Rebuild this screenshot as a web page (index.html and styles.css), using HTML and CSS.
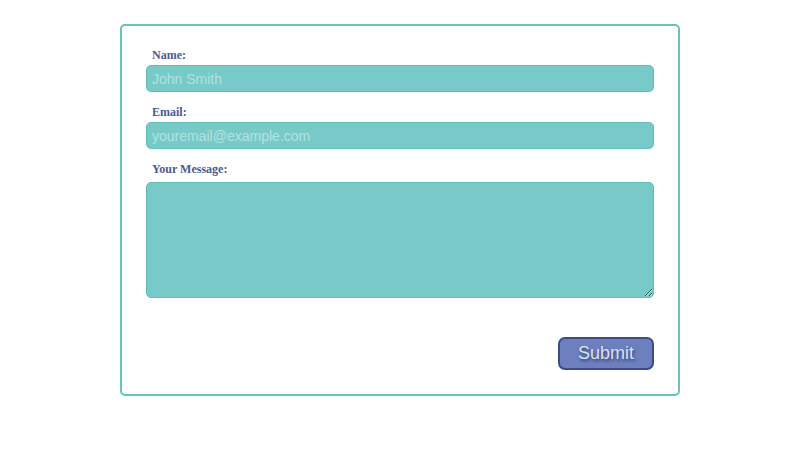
FILE: index.html
```html
<!DOCTYPE html>
<html>
<head>
<meta charset="utf-8">
<link rel="stylesheet" href="styles.css">
</head>
<body>
<form class="card">
  <label class="lbl" for="n">Name:</label>
  <input class="field" id="n" type="text" placeholder="John Smith">
  <label class="lbl" for="e">Email:</label>
  <input class="field" id="e" type="text" placeholder="youremail@example.com">
  <label class="lbl" for="m">Your Message:</label>
  <textarea class="field area" id="m"></textarea>
  <div class="actions"><button class="btn" type="button">Submit</button></div>
</form>
</body>
</html>
```
FILE: styles.css
```css
html, body { margin: 0; padding: 0; background: #fff; }
body { padding-top: 24px; }
.card {
  box-sizing: border-box;
  width: 560px;
  height: 372px;
  margin: 0 auto;
  border: 2px solid #6cc1ba;
  border-radius: 5px;
  padding: 22px 24px 24px;
  display: flex;
  flex-direction: column;
}
.lbl {
  font-family: "Liberation Serif", serif;
  font-weight: bold;
  font-size: 12px;
  line-height: 15px;
  color: #4b5a91;
  padding-left: 6px;
  margin-bottom: 2px;
}
.field {
  box-sizing: border-box;
  width: 508px;
  height: 27px;
  background: #77cac8;
  border: 1.5px solid #5ebdb4;
  border-radius: 5px;
  padding: 0 5px;
  font-family: "Liberation Sans", sans-serif;
  font-size: 14px;
  color: #fff;
  margin: 0 0 13px 0;
  outline: none;
}
.field::placeholder { color: #b2e2e0; }
.area {
  height: 116px;
  margin-top: 3px;
  margin-bottom: 39px;
  resize: vertical;
}
.actions { display: flex; justify-content: flex-end; }
.btn {
  box-sizing: border-box;
  width: 96px;
  height: 33px;
  background: #6e7fbf;
  border: 2px solid #3d4b88;
  border-radius: 7px;
  font-family: "Liberation Sans", sans-serif;
  font-size: 18px;
  color: #d7e2f2;
  text-shadow: 1px 2px 3px #2f3a6a;
  padding: 0;
}
```
